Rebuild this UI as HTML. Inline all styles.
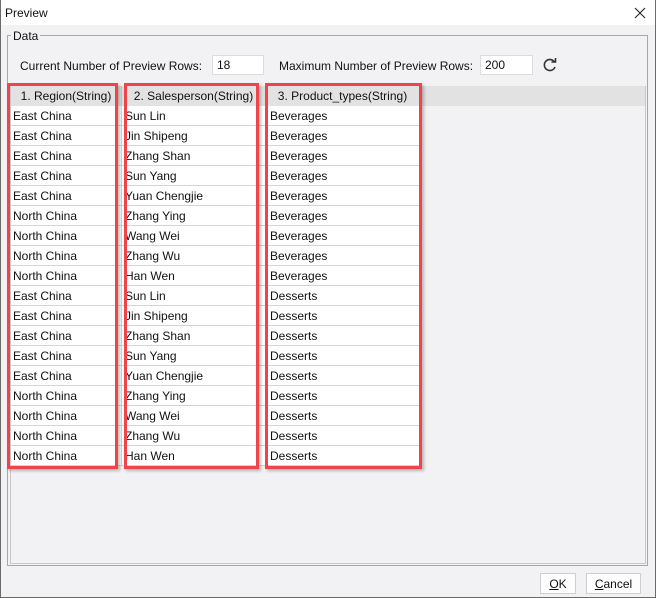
<!DOCTYPE html>
<html><head><style>
*{margin:0;padding:0;box-sizing:border-box}
body{width:656px;height:598px;position:relative;overflow:hidden;background:#f2f2f4;font-family:"Liberation Sans",Tahoma,sans-serif;font-size:12px;color:#111}
.a{position:absolute}
.win{left:0;top:0;width:656px;height:598px;border:1px solid #6b6b6b;border-top:none}
.title{left:0;top:0;width:656px;height:25px;background:#fff}
.gb{left:7px;top:35px;width:641px;height:531px;border:1px solid #a8a8a0}
.grid{left:10px;top:86px;width:636px;height:478px;border:1px solid #c8c8c8;background:#f2f2f4}
.hdr{left:11px;top:86px;width:634px;height:20px;background:#e2e2e2}
.cell{position:absolute;height:20px;line-height:21px;background:#fff;border-bottom:1px solid #d4d4d4;border-right:1px solid #d4d4d4;padding-left:2px;white-space:nowrap;overflow:hidden}
.h{position:absolute;top:86px;height:20px;line-height:21px;text-align:center;border-right:1px solid #c8c8c8}
.red{position:absolute;border:3px solid #f0444c;box-shadow:2px 2px 3px rgba(0,0,0,.25)}
.in{background:#fff;border:1px solid #dcdcdc;height:20px;line-height:19px;padding-left:4px}
.btn{background:#fdfdfd;border:1px solid #cfcfcf;height:21px;line-height:20px;text-align:center}
</style></head><body>
<div class="a title"></div>
<div class="a" style="left:5px;top:6px">Preview</div>
<svg class="a" style="left:634px;top:7px" width="12" height="12" viewBox="0 0 12 12"><path d="M1 1L11 11M11 1L1 11" stroke="#222" stroke-width="1.1"/></svg>
<div class="a gb"></div>
<div class="a" style="left:11px;top:29px;background:#f2f2f4;padding:0 2px">Data</div>
<div class="a" style="left:20px;top:59px">Current Number of Preview Rows:</div>
<div class="a in" style="left:212px;top:55px;width:52px">18</div>
<div class="a" style="left:279px;top:59px">Maximum Number of Preview Rows:</div>
<div class="a in" style="left:480px;top:55px;width:53px">200</div>
<svg class="a" style="left:542px;top:57px" width="16" height="16" viewBox="0 0 16 16"><path d="M12.5 5A5.5 5.5 0 1 0 13 10" fill="none" stroke="#333" stroke-width="1.6"/><path d="M9.5 5H13.5V1" fill="none" stroke="#333" stroke-width="1.6"/></svg>
<div class="a grid"></div>
<div class="a hdr"></div>
<div class="h" style="left:11px;width:111px">1. Region(String)</div>
<div class="h" style="left:122px;width:144px">2. Salesperson(String)</div>
<div class="h" style="left:266px;width:154px">3. Product_types(String)</div>
<div id="rows"></div>
<script>
var r=["East China","East China","East China","East China","East China","North China","North China","North China","North China","East China","East China","East China","East China","East China","North China","North China","North China","North China"];
var s=["Sun Lin","Jin Shipeng","Zhang Shan","Sun Yang","Yuan Chengjie","Zhang Ying","Wang Wei","Zhang Wu","Han Wen"];
var h="";
for(var i=0;i<18;i++){var y=106+i*20;
h+='<div class="cell" style="left:11px;top:'+y+'px;width:111px">'+r[i]+'</div>';
h+='<div class="cell" style="left:122px;top:'+y+'px;width:144px;padding-left:3px">'+s[i%9]+'</div>';
h+='<div class="cell" style="left:266px;top:'+y+'px;width:154px;padding-left:4px">'+(i<9?"Beverages":"Desserts")+'</div>';}
document.getElementById("rows").innerHTML=h;
</script>
<div class="red" style="left:7px;top:83px;width:111px;height:386px"></div>
<div class="red" style="left:124px;top:83px;width:135px;height:386px"></div>
<div class="red" style="left:265px;top:83px;width:157px;height:386px"></div>
<div class="a btn" style="left:540px;top:573px;width:36px"><u>O</u>K</div>
<div class="a btn" style="left:586px;top:573px;width:55px"><u>C</u>ancel</div>
<div class="a win"></div>
</body></html>
